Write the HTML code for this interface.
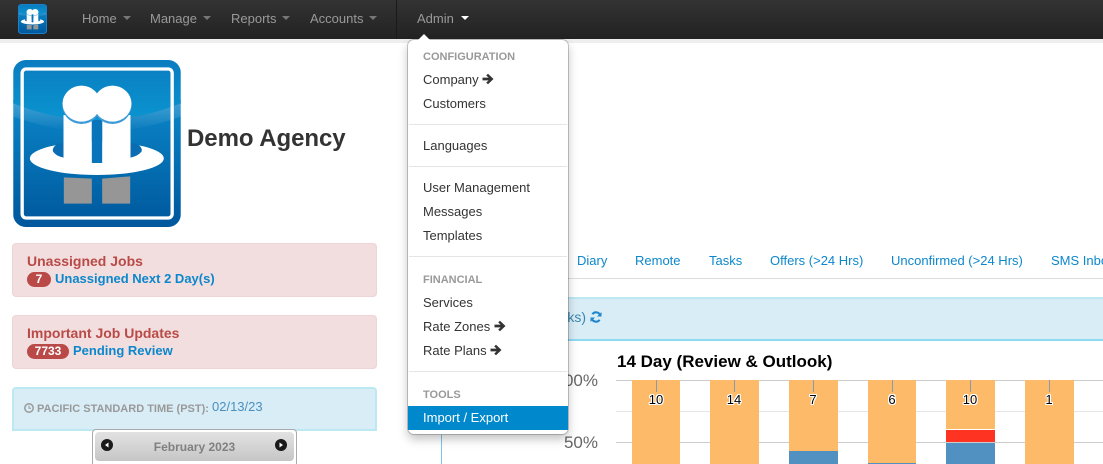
<!DOCTYPE html>
<html><head><meta charset="utf-8">
<style>
html,body{margin:0;padding:0;width:1103px;height:464px;overflow:hidden;background:#fff;font-family:"Liberation Sans",Arial,sans-serif;font-size:14px;color:#333}
#wrap{position:relative;width:1103px;height:464px;overflow:hidden;background:#fff}
.a{position:absolute;white-space:nowrap}
#nav{position:absolute;left:0;top:0;width:1103px;height:39px;background:linear-gradient(#333,#222)}
#strip{position:absolute;left:0;top:39px;width:1103px;height:4px;background:#eee}
.n{position:absolute;top:10px;line-height:17px;color:#999;font-size:13px}
.c{position:absolute;top:16px;width:0;height:0;border:4px solid transparent;border-top-color:#777;border-bottom:0}
.al{position:absolute;left:12px;width:363px;height:52px;background:#f2dede;border:1px solid #eed3d7;border-radius:4px}
.t{position:absolute;left:14px;top:9px;font-weight:bold;font-size:14px;line-height:16px;color:#b94a48;white-space:nowrap}
.b{position:absolute;left:14px;top:28px;height:15px;line-height:15px;border-radius:8px;background:#b94a48;color:#fff;font-weight:bold;font-size:12px;text-align:center}
.l{position:absolute;top:27px;font-size:13px;font-weight:bold;line-height:16px;color:#0d87cc;white-space:nowrap}
#menu{position:absolute;left:408px;top:40px;width:160px;height:394px;background:#fff;border-radius:6px;box-shadow:0 0 0 1px rgba(0,0,0,.2),0 5px 10px rgba(0,0,0,.25)}
.i{position:absolute;left:15px;font-size:13px;line-height:16px;color:#333;white-space:nowrap}
.h{position:absolute;left:15px;font-size:11px;line-height:14px;font-weight:bold;color:#999;white-space:nowrap}
.d{position:absolute;left:1px;width:158px;height:1px;background:#e5e5e5}
.tab{position:absolute;top:253px;font-size:13px;line-height:16px;color:#0d87cc;white-space:nowrap}
.bar{position:absolute;background:#fdba68}
.v{position:absolute;top:392px;width:40px;text-align:center;font-size:13px;line-height:15px;color:#000;text-shadow:1px 0 #fff,-1px 0 #fff,0 1px #fff,0 -1px #fff,1px 1px #fff,-1px -1px #fff,1px -1px #fff,-1px 1px #fff}
.tick{position:absolute;top:380px;width:1px;height:12px;background:#8a9bb0}
.ar{position:absolute}
</style></head><body>
<div id="wrap">

<svg width="0" height="0" style="position:absolute">
<defs>
<linearGradient id="g1" x1="0" y1="0" x2="0" y2="1"><stop offset="0" stop-color="#0a86c8"/><stop offset="1" stop-color="#00579c"/></linearGradient>
<linearGradient id="g2" x1="0" y1="0" x2="0" y2="1"><stop offset="0" stop-color="#0a7cc0"/><stop offset="1" stop-color="#0a94d0"/></linearGradient>
<linearGradient id="g3" x1="0" y1="0" x2="0" y2="1"><stop offset="0" stop-color="#fff" stop-opacity=".22"/><stop offset="1" stop-color="#fff" stop-opacity="0"/></linearGradient>
<clipPath id="cp"><rect x="40" y="180" width="503" height="501" rx="38"/></clipPath>
<symbol id="bg" viewBox="40 180 503 501">
<g clip-path="url(#cp)">
<rect x="40" y="300" width="503" height="381" fill="url(#g1)"/>
<path d="M40 180H543V310Q292 410 40 310Z" fill="url(#g2)"/>
<path d="M40 310Q292 410 543 310V350Q292 440 40 350Z" fill="url(#g3)"/>
</g>
</symbol>
<symbol id="art" viewBox="40 180 503 501">
<ellipse cx="291" cy="475" rx="201" ry="50" fill="#fff"/>
<path d="M178 430Q155 440 160 455Q168 468 191 473V430Z" fill="#0a6cb3"/>
<path d="M406 430Q430 440 425 455Q415 468 392 473V430Z" fill="#0a6cb3"/>
<rect x="191" y="345" width="85" height="145" fill="#fff"/>
<rect x="307" y="345" width="85" height="145" fill="#fff"/>
<rect x="276" y="360" width="31" height="129" fill="#0a74bb"/>
<ellipse cx="245" cy="318" rx="57" ry="54" fill="#3f9bd8"/><ellipse cx="338" cy="318" rx="57" ry="54" fill="#3f9bd8"/>
<ellipse cx="245" cy="311" rx="57" ry="54" fill="#fff"/><ellipse cx="338" cy="311" rx="57" ry="54" fill="#fff"/>
<path d="M192 532L276 536V611H192Z" fill="#969696"/>
<path d="M307 536L391 529V611H307Z" fill="#969696"/>
</symbol>
<symbol id="arr" viewBox="0 0 12 12"><path d="M6 .8L11.5 6L6 11.2L4.2 9.6L6.6 7.4H.5V4.6H6.6L4.2 2.4Z" fill="#333"/></symbol>
</defs>
</svg>

<div id="nav"></div><div id="strip"></div>
<svg class="a" style="left:18px;top:4px" width="29" height="30"><use href="#bg" width="29" height="30"/><rect x=".5" y=".5" width="28" height="29" rx="3" fill="none" stroke="#1b7fc8"/><use href="#art" width="29" height="30"/></svg>
<div class="n" style="left:82px">Home</div><div class="c" style="left:123px"></div>
<div class="n" style="left:150px">Manage</div><div class="c" style="left:203px"></div>
<div class="n" style="left:231px">Reports</div><div class="c" style="left:282px"></div>
<div class="n" style="left:310px">Accounts</div><div class="c" style="left:369px"></div>
<div class="a" style="left:396px;top:0;width:1px;height:39px;background:#1a1a1a"></div>
<div class="n" style="left:417px">Admin</div><div class="c" style="left:461px;border-top-color:#fff"></div>

<svg class="a" style="left:13px;top:60px" width="168" height="167" viewBox="40 180 503 501"><use href="#bg" x="40" y="180" width="503" height="501"/><rect x="67" y="207" width="450" height="447" rx="12" fill="none" stroke="#fff" stroke-width="10"/><use href="#art" x="40" y="180" width="503" height="501"/></svg>
<div class="a" style="left:187px;top:125px;font-size:24px;line-height:28px;font-weight:bold;color:#333;letter-spacing:-.05px">Demo Agency</div>

<div class="al" style="top:243px"><div class="t">Unassigned Jobs</div><div class="b" style="width:24px">7</div><div class="l" style="left:42px">Unassigned Next 2 Day(s)</div></div>
<div class="al" style="top:315px"><div class="t">Important Job Updates</div><div class="b" style="width:42px">7733</div><div class="l" style="left:60px">Pending Review</div></div>

<div class="a" style="left:12px;top:387px;width:361px;height:40px;background:#d9edf7;border:2px solid #bce8f1;border-radius:4px 4px 0 0"></div>
<svg class="a" style="left:23px;top:402px" width="12" height="12"><circle cx="6" cy="6" r="4.2" fill="none" stroke="#999" stroke-width="1.5"/><path d="M6 3.5V6.2H8" fill="none" stroke="#999"/></svg>
<div class="a" style="left:37px;top:402px;font-size:11px;line-height:14px;font-weight:bold;color:#999">PACIFIC STANDARD TIME (PST):</div>
<div class="a" style="left:212px;top:399px;font-size:13px;line-height:16px;color:#4a8fbf">02/13/23</div>

<div class="a" style="left:92px;top:429px;width:203px;height:40px;border:1px solid #aaa;border-radius:4px;background:#fff"></div>
<div class="a" style="left:95px;top:432px;width:199px;height:29px;border-radius:4px;background:linear-gradient(#e2e2e2,#c6c6c6)"></div>
<div class="a" style="left:95px;top:440px;width:199px;text-align:center;font-size:12px;line-height:15px;font-weight:bold;color:#808080">February 2023</div>
<svg class="a" style="left:101px;top:439px" width="12" height="12"><circle cx="6" cy="6" r="6" fill="#1a1a1a"/><path d="M7.5 3.5V8.5L4 6Z" fill="#fff"/></svg>
<svg class="a" style="left:275px;top:439px" width="12" height="12"><circle cx="6" cy="6" r="6" fill="#1a1a1a"/><path d="M4.5 3.5V8.5L8 6Z" fill="#fff"/></svg>

<div class="a" style="left:441px;top:278px;width:662px;height:1px;background:#ddd"></div>
<div class="tab" style="left:577px">Diary</div>
<div class="tab" style="left:635px">Remote</div>
<div class="tab" style="left:709px">Tasks</div>
<div class="tab" style="left:770px">Offers (&gt;24 Hrs)</div>
<div class="tab" style="left:891px">Unconfirmed (&gt;24 Hrs)</div>
<div class="tab" style="left:1051px">SMS Inbox</div>

<div class="a" style="left:441px;top:297px;width:662px;height:40px;background:#d9edf7;border-top:2px solid #bce8f1;border-bottom:2px solid #8edaf5"></div>
<div class="a" style="left:486px;top:309px;width:100px;text-align:right;font-size:14px;line-height:16px;color:#3a87ad">(7 Weeks)</div>
<svg class="a" style="left:590px;top:311px" width="12" height="12" viewBox="0 0 12 12"><path d="M10.2 4.4A4.4 4.4 0 0 0 2.4 3.2M1.8 7.6A4.4 4.4 0 0 0 9.6 8.8" fill="none" stroke="#1f86cc" stroke-width="2.1"/><path d="M11.5 1V5.5H7Z M.5 11V6.5H5Z" fill="#1f86cc"/></svg>

<div class="a" style="left:441px;top:435px;width:1px;height:29px;background:#7cc4ec"></div>
<div class="a" style="left:617px;top:352px;font-size:17px;line-height:20px;font-weight:bold;color:#000">14 Day (Review &amp; Outlook)</div>

<div class="a" style="left:616px;top:380px;width:487px;height:1px;background:#ccc"></div>
<div class="a" style="left:616px;top:411px;width:487px;height:1px;background:#e6e6e6"></div>
<div class="a" style="left:616px;top:442px;width:487px;height:1px;background:#ccc"></div>
<div class="a" style="left:520px;top:371px;width:78px;text-align:right;font-size:17px;line-height:20px;color:#666">100%</div>
<div class="a" style="left:520px;top:433px;width:78px;text-align:right;font-size:17px;line-height:20px;color:#666">50%</div>

<div class="bar" style="left:632px;top:380px;width:48px;height:84px"></div>
<div class="bar" style="left:710px;top:380px;width:49px;height:84px"></div>
<div class="bar" style="left:789px;top:380px;width:49px;height:71px"></div>
<div class="a" style="left:789px;top:451px;width:49px;height:13px;background:#5191c1"></div>
<div class="bar" style="left:868px;top:380px;width:48px;height:83px"></div>
<div class="a" style="left:868px;top:463px;width:48px;height:1px;background:#5191c1"></div>
<div class="bar" style="left:946px;top:380px;width:49px;height:49px"></div>
<div class="a" style="left:946px;top:430px;width:49px;height:12px;background:#ff3322"></div>
<div class="a" style="left:946px;top:443px;width:49px;height:21px;background:#5191c1"></div>
<div class="bar" style="left:1025px;top:380px;width:49px;height:84px"></div>

<div class="tick" style="left:656px"></div><div class="tick" style="left:734px"></div><div class="tick" style="left:813px"></div><div class="tick" style="left:892px"></div><div class="tick" style="left:970px"></div><div class="tick" style="left:1049px"></div>
<div class="v" style="left:636px">10</div><div class="v" style="left:714px">14</div><div class="v" style="left:793px">7</div><div class="v" style="left:872px">6</div><div class="v" style="left:950px">10</div><div class="v" style="left:1029px">1</div>

<div id="menu">
<div class="h" style="top:10px">CONFIGURATION</div>
<div class="i" style="top:32px">Company</div><svg class="ar" style="left:74px;top:33px" width="12" height="12"><use href="#arr" width="12" height="12"/></svg>
<div class="i" style="top:56px">Customers</div>
<div class="d" style="top:84px"></div>
<div class="i" style="top:98px">Languages</div>
<div class="d" style="top:126px"></div>
<div class="i" style="top:140px">User Management</div>
<div class="i" style="top:164px">Messages</div>
<div class="i" style="top:188px">Templates</div>
<div class="d" style="top:216px"></div>
<div class="h" style="top:233px">FINANCIAL</div>
<div class="i" style="top:255px">Services</div>
<div class="i" style="top:279px">Rate Zones</div><svg class="ar" style="left:86px;top:280px" width="12" height="12"><use href="#arr" width="12" height="12"/></svg>
<div class="i" style="top:303px">Rate Plans</div><svg class="ar" style="left:82px;top:304px" width="12" height="12"><use href="#arr" width="12" height="12"/></svg>
<div class="d" style="top:331px"></div>
<div class="h" style="top:348px">TOOLS</div>
<div class="a" style="left:0;top:366px;width:160px;height:24px;background:#0088cc"></div>
<div class="i" style="top:370px;color:#fff">Import / Export</div>
</div>
<div class="a" style="left:418px;top:34px;width:0;height:0;border:6px solid transparent;border-bottom-color:#fff;border-top:0"></div>

</div>
</body></html>
